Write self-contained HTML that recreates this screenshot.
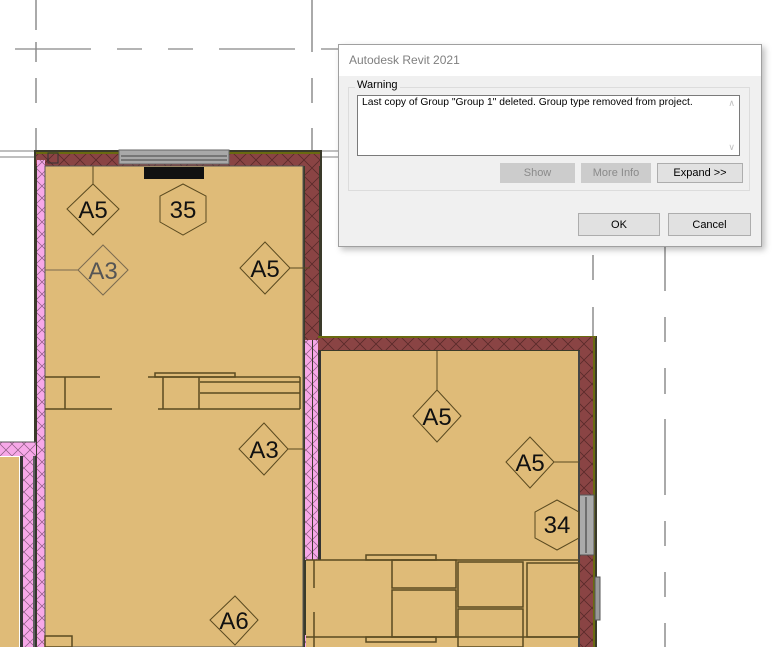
<!DOCTYPE html>
<html><head><style>
html,body{margin:0;padding:0;width:776px;height:647px;overflow:hidden;background:#fff;}
svg{position:absolute;left:0;top:0;}
.dlg{position:absolute;left:338px;top:44px;width:422px;height:201px;background:#f0f0f0;border:1px solid #a0a0a0;box-shadow:3px 3px 6px rgba(0,0,0,.25);font-family:"Liberation Sans",sans-serif;font-size:11px;color:#000;}
.tb{height:31px;background:#fff;color:#808080;font-size:12px;line-height:31px;padding-left:10px;}
.grp{position:absolute;left:9px;top:42px;width:400px;height:102px;border:1px solid #dcdcdc;}
.grp .lg{position:absolute;left:6px;top:-9px;background:#f0f0f0;padding:0 2px;font-size:11px;}
.ta{position:absolute;left:8px;top:7px;width:383px;height:61px;background:#fff;border:1px solid #7a7a7a;font-size:10.3px;padding:1px 4px;box-sizing:border-box;}
.sb{position:absolute;right:4px;color:#c0c0c0;font-size:9px;}
.btn{position:absolute;height:20px;border:1px solid #adadad;background:#e1e1e1;text-align:center;line-height:19px;font-size:11px;box-sizing:border-box;}
.dis{color:#8a8a8a;background:#cccccc;border-color:#cccccc;}
</style></head><body>
<svg width="776" height="647" viewBox="0 0 776 647" xmlns="http://www.w3.org/2000/svg" font-family="Liberation Sans, sans-serif">
<defs>
<pattern id="mh" width="16" height="16" patternUnits="userSpaceOnUse"><rect width="16" height="16" fill="#8a4444"/><path d="M0 0L16 16M16 0L0 16" stroke="#5a2a2a" stroke-width="0.8"/></pattern>
<pattern id="ph" width="12" height="12" patternUnits="userSpaceOnUse"><rect width="12" height="12" fill="#f7a8e8"/><path d="M0 0L12 12M12 0L0 12" stroke="#8a5a80" stroke-width="0.7"/></pattern>
</defs>
<g stroke="#555" stroke-width="1">
<line x1="36" y1="0" x2="36" y2="30"/><line x1="36" y1="42" x2="36" y2="62"/><line x1="36" y1="78" x2="36" y2="103"/><line x1="36" y1="128" x2="36" y2="150"/>
<line x1="312" y1="0" x2="312" y2="52"/><line x1="312" y1="78" x2="312" y2="103"/><line x1="312" y1="128" x2="312" y2="150"/>
<line x1="593" y1="255" x2="593" y2="280"/><line x1="593" y1="307" x2="593" y2="336"/>
<line x1="665" y1="245" x2="665" y2="291"/><line x1="665" y1="317" x2="665" y2="342"/><line x1="665" y1="368" x2="665" y2="394"/><line x1="665" y1="419" x2="665" y2="495"/><line x1="665" y1="521" x2="665" y2="546"/><line x1="665" y1="572" x2="665" y2="597"/><line x1="665" y1="623" x2="665" y2="647"/>
</g>
<g stroke="#888" stroke-width="1.3">
<line x1="15" y1="49" x2="91" y2="49"/><line x1="117" y1="49" x2="142" y2="49"/><line x1="168" y1="49" x2="193" y2="49"/><line x1="219" y1="49" x2="295" y2="49"/><line x1="321" y1="49" x2="340" y2="49"/>
</g>
<line x1="0" y1="151" x2="340" y2="151" stroke="#555" stroke-width="0.8"/>
<line x1="0" y1="157" x2="340" y2="157" stroke="#555" stroke-width="0.8"/>
<rect x="34" y="150" width="288" height="497" fill="#3a3a2a"/>
<rect x="36" y="152" width="284" height="14" fill="url(#mh)"/>
<line x1="36" y1="153" x2="320" y2="153" stroke="#6a6a10" stroke-width="2"/>
<rect x="37" y="160" width="8" height="487" fill="url(#ph)"/>
<rect x="305" y="160" width="14" height="180" fill="url(#mh)"/>
<rect x="305" y="340" width="7" height="220" fill="url(#ph)"/><rect x="313" y="340" width="7" height="220" fill="url(#ph)"/>
<rect x="305" y="635" width="14" height="12" fill="url(#ph)"/>
<rect x="45" y="166" width="258" height="481" fill="#dfbb78"/>
<rect x="45" y="166" width="258" height="481" fill="none" stroke="#555" stroke-width="1"/>
<rect x="119" y="150" width="110" height="14" fill="#a8a8a8" stroke="#666"/>
<line x1="121" y1="156" x2="227" y2="156" stroke="#444"/><line x1="121" y1="160" x2="227" y2="160" stroke="#444"/>
<rect x="144" y="167" width="60" height="12" fill="#111"/>
<rect x="48" y="153" width="10" height="10" fill="none" stroke="#333"/>
<rect x="0" y="442" width="36" height="14" fill="url(#ph)"/>
<line x1="0" y1="442" x2="36" y2="442" stroke="#555"/>
<rect x="20" y="456" width="16" height="191" fill="#333"/>
<rect x="23" y="456" width="10" height="191" fill="url(#ph)"/>
<line x1="34" y1="456" x2="34" y2="647" stroke="#888"/>
<rect x="0" y="457" width="19" height="190" fill="#dfbb78"/>
<rect x="318" y="336" width="279" height="311" fill="#3a3a2a"/>
<rect x="318" y="337" width="277" height="13" fill="url(#mh)"/>
<line x1="318" y1="337" x2="596" y2="337" stroke="#6a6a10" stroke-width="2"/>
<rect x="580" y="337" width="14" height="310" fill="url(#mh)"/>
<line x1="594" y1="337" x2="594" y2="647" stroke="#6a6a10" stroke-width="2"/>
<rect x="579" y="495" width="15" height="60" fill="#aaa" stroke="#555"/>
<line x1="586" y1="497" x2="586" y2="553" stroke="#333"/>
<rect x="595" y="577" width="5" height="43" fill="#999" stroke="#555"/>
<rect x="320" y="351" width="259" height="296" fill="#dfbb78"/>
<rect x="306" y="560" width="274" height="87" fill="#dfbb78"/>
<line x1="320" y1="351" x2="320" y2="560" stroke="#333" stroke-width="2"/>
<line x1="579" y1="351" x2="579" y2="647" stroke="#444" stroke-width="2"/>
<g stroke="#5a4a20" stroke-width="1.5" fill="none">
<line x1="45" y1="377" x2="100" y2="377"/><line x1="45" y1="409" x2="112" y2="409"/><line x1="65" y1="377" x2="65" y2="409"/>
<line x1="148" y1="377" x2="300" y2="377"/><line x1="158" y1="409" x2="300" y2="409"/>
<rect x="155" y="373" width="80" height="4"/><line x1="163" y1="377" x2="163" y2="409"/><line x1="199" y1="377" x2="199" y2="409"/>
<line x1="200" y1="382" x2="300" y2="382"/><line x1="200" y1="393" x2="300" y2="393"/><line x1="300" y1="377" x2="300" y2="409"/>
<rect x="45" y="636" width="27" height="11"/>
</g>
<g stroke="#5a4a20" stroke-width="1.5" fill="none">
<line x1="306" y1="560" x2="579" y2="560"/><rect x="366" y="555" width="70" height="5"/>
<rect x="392" y="560" width="64" height="28"/><rect x="392" y="590" width="64" height="47"/>
<rect x="458" y="562" width="65" height="45"/><rect x="458" y="609" width="65" height="38"/>
<rect x="527" y="563" width="52" height="74"/>
<line x1="306" y1="637" x2="579" y2="637"/><rect x="366" y="637" width="70" height="5"/>
<line x1="314" y1="560" x2="314" y2="588"/><line x1="314" y1="612" x2="314" y2="647"/>
</g>
<g fill="none" stroke="#5a4a20" stroke-width="1">
<line x1="93" y1="166" x2="93" y2="184"/>
<path d="M93 184L119 209L93 235L67 209Z"/>
<path d="M183 184L206 196L206 222L183 235L160 222L160 196Z"/>
<path d="M103 245L128 270L103 295L78 270Z" stroke="#7a6a50"/><line x1="45" y1="270" x2="78" y2="270" stroke="#7a6a50"/>
<path d="M265 242L290 268L265 294L240 268Z"/><line x1="290" y1="268" x2="310" y2="268"/>
<path d="M264 423L288 449L264 475L239 449Z"/><line x1="288" y1="449" x2="305" y2="449"/>
<path d="M235 596L258 620L235 645L210 620Z"/>
<line x1="437" y1="351" x2="437" y2="390"/>
<path d="M437 390L461 416L437 442L413 416Z"/>
<path d="M530 437L554 462L530 488L506 462Z"/><line x1="554" y1="462" x2="579" y2="462"/>
<path d="M557 500L579 512L579 538L557 550L535 538L535 512Z"/>
</g>
<g font-size="24" text-anchor="middle" fill="#111">
<text x="93" y="218">A5</text><text x="183" y="218">35</text>
<text x="103" y="279" fill="#555">A3</text><text x="265" y="277">A5</text>
<text x="264" y="458">A3</text><text x="234" y="629">A6</text>
<text x="437" y="425">A5</text><text x="530" y="471">A5</text><text x="557" y="533">34</text>
</g>
</svg>
<div class="dlg">
<div class="tb">Autodesk Revit 2021</div>
<div class="grp"><span class="lg">Warning</span>
<div class="ta">Last copy of Group "Group 1" deleted. Group type removed from project.<span class="sb" style="top:2px">&#8743;</span><span class="sb" style="bottom:2px">&#8744;</span></div>
<div class="btn dis" style="left:151px;top:75px;width:75px;">Show</div>
<div class="btn dis" style="left:232px;top:75px;width:70px;">More Info</div>
<div class="btn" style="left:308px;top:75px;width:86px;">Expand &gt;&gt;</div>
</div>
<div class="btn" style="left:239px;top:168px;width:82px;height:23px;line-height:22px;">OK</div>
<div class="btn" style="left:329px;top:168px;width:83px;height:23px;line-height:22px;">Cancel</div>
</div>
</body></html>
